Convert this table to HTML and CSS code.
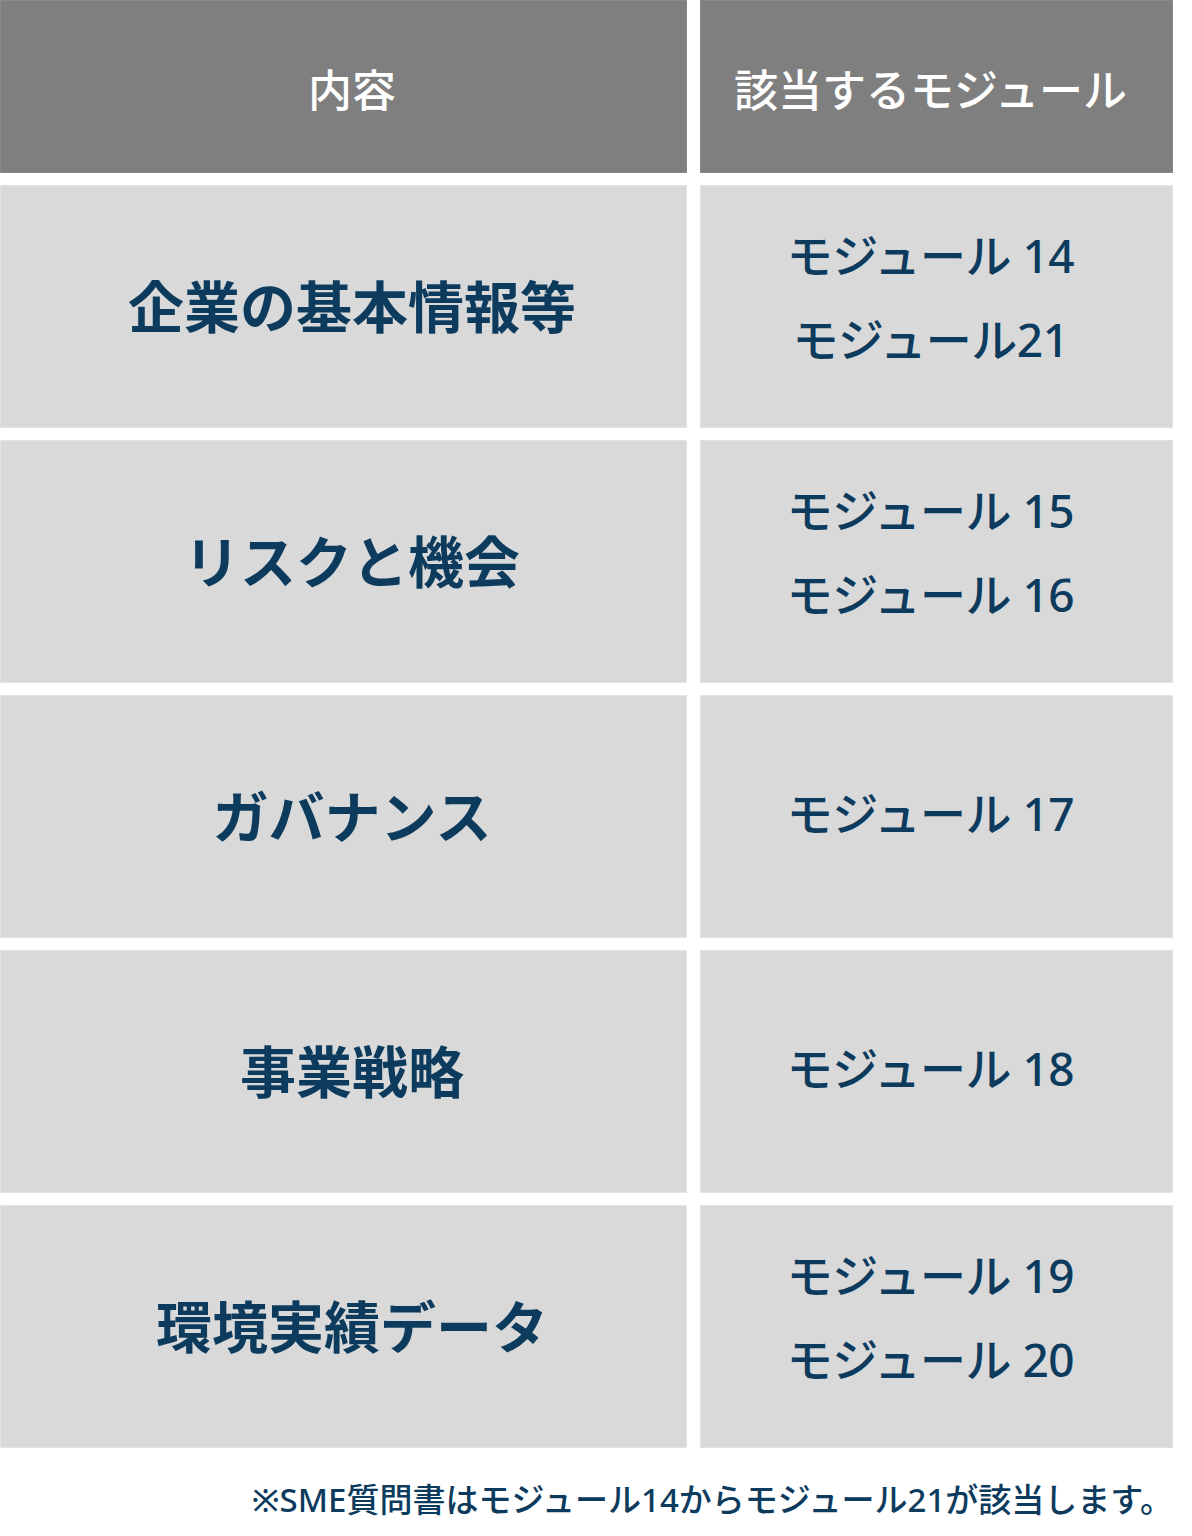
FILE: index.html
```html
<!DOCTYPE html>
<html lang="ja">
<head>
<meta charset="utf-8">
<title>SME質問書 モジュール対応表</title>
<link rel="stylesheet" href="styles.css">
</head>
<body>
<div class="table">
  <div class="cell head left">内容</div>
  <div class="cell head right">該当するモジュール</div>

  <div class="cell body left">企業の基本情報等</div>
  <div class="cell body right two"><span>モジュール 14</span><span>モジュール21</span></div>

  <div class="cell body left">リスクと機会</div>
  <div class="cell body right two"><span>モジュール 15</span><span>モジュール 16</span></div>

  <div class="cell body left">ガバナンス</div>
  <div class="cell body right"><span>モジュール 17</span></div>

  <div class="cell body left">事業戦略</div>
  <div class="cell body right"><span>モジュール 18</span></div>

  <div class="cell body left">環境実績データ</div>
  <div class="cell body right two"><span>モジュール 19</span><span>モジュール 20</span></div>
</div>
<p class="note">※SME質問書はモジュール14からモジュール21が該当します。</p>
</body>
</html>
```

FILE: styles.css
```css
html, body {
  margin: 0;
  padding: 0;
  background: #ffffff;
}

body {
  width: 1192px;
  font-family: "Noto Sans CJK JP", "Noto Sans", sans-serif;
  color: #0d3b5e;
}

.table {
  display: grid;
  width: 1173px;
  grid-template-columns: 687px 473px;
  grid-template-rows: 172.5px repeat(5, 242.5px);
  column-gap: 13px;
  row-gap: 12.5px;
}

.cell {
  box-sizing: border-box;
  display: flex;
  flex-direction: column;
  align-items: center;
  justify-content: center;
  text-align: center;
}

.head {
  background: #7f7f7f;
  color: #ffffff;
  font-size: 44px;
  font-weight: 500;
  border: 1px solid #8a8a8a;
  padding-top: 4px;
}

.body {
  background: #d9d9d9;
  border: 1px solid #e3e3e3;
}

.left {
  padding-left: 17px;
}

.right {
  padding-right: 12px;
}

.body.left {
  font-size: 56px;
  font-weight: 700;
  padding-bottom: 6px;
}

.body.right {
  font-family: "Noto Sans", "Noto Sans CJK JP", sans-serif;
  font-size: 46px;
  font-weight: 500;
  line-height: 84px;
  letter-spacing: -0.5px;
  padding-bottom: 6px;
}

.body.right.two {
  padding-bottom: 18px;
}

.body.right span {
  display: block;
}

.note {
  margin: 28px 0 0 0;
  width: 1173px;
  text-align: right;
  font-family: "Noto Sans", "Noto Sans CJK JP", sans-serif;
  font-size: 33px;
  font-weight: 500;
  line-height: 48px;
}
```
